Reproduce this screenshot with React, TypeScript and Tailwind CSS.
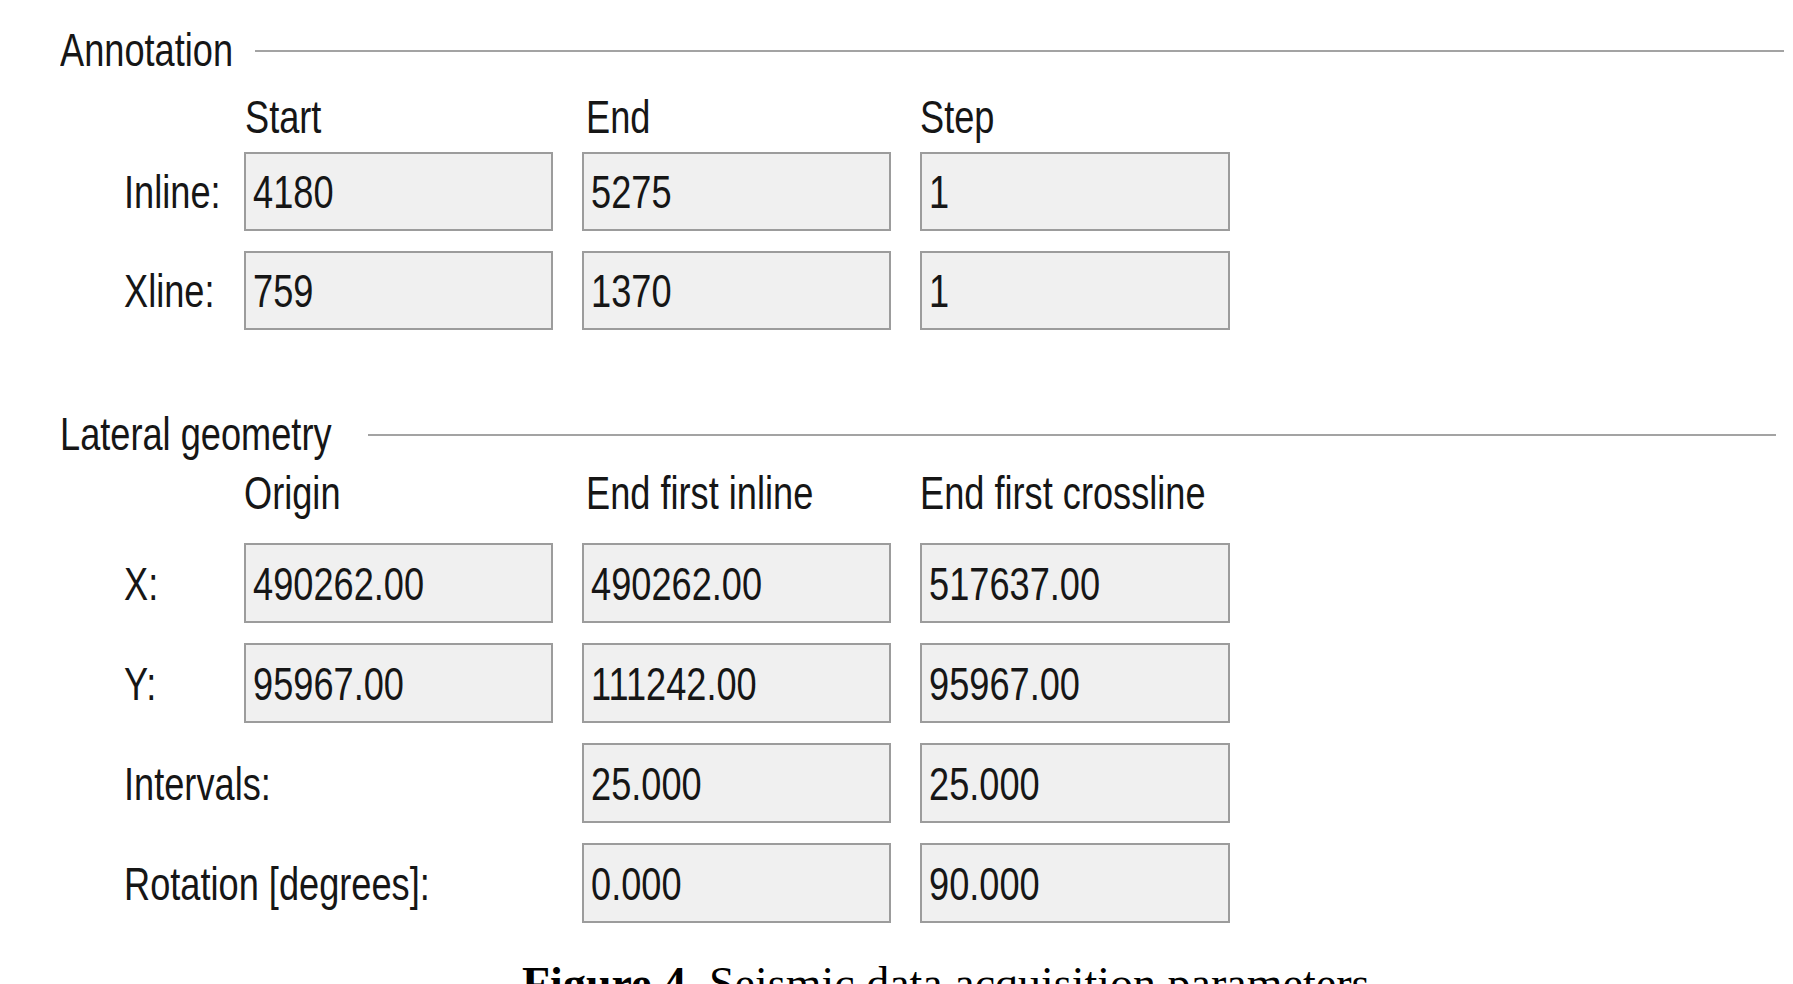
import React from "react";

const T = ({ children }: { children: React.ReactNode }) => (
  <span className="inline-block origin-left scale-x-[0.77] whitespace-nowrap">{children}</span>
);

const Box = ({ v }: { v: string }) => (
  <div className="h-[79px] border-2 border-[#9c9c9c] bg-[#f0f0f0] flex items-center pl-[7px]">
    <T>{v}</T>
  </div>
);

const Box2 = ({ v }: { v: string }) => (
  <div className="h-[80px] border-2 border-[#9c9c9c] bg-[#f0f0f0] flex items-center pl-[7px]">
    <T>{v}</T>
  </div>
);

const Label = ({ children, span2 }: { children: React.ReactNode; span2?: boolean }) => (
  <div className={"flex items-center pl-[124px] " + (span2 ? "col-span-2" : "")}>
    <T>{children}</T>
  </div>
);

const Header = ({ title, width, pr }: { title: string; width: string; pr: string }) => (
  <div className={"flex items-start pl-[60px] " + pr}>
    <div className={"shrink-0 " + width}>
      <T>{title}</T>
    </div>
    <div className="flex-1 h-[2px] bg-[#a3a3a3] mt-[24px]" />
  </div>
);

export default function App() {
  return (
    <div className="w-[1793px] h-[984px] overflow-hidden bg-white text-[#161616] font-['Liberation_Sans',Arial,sans-serif] text-[47px] leading-none">
      <div className="pt-[26px]">
        <Header title="Annotation" width="w-[195px]" pr="pr-[9px]" />

        <div className="mt-[20px] grid grid-cols-[215px_309px_309px_310px] gap-x-[29px]">
          <div />
          <div className="pl-[1px]"><T>Start</T></div>
          <div className="pl-[4px]"><T>End</T></div>
          <div><T>Step</T></div>
        </div>

        <div className="mt-[12px] grid grid-cols-[215px_309px_309px_310px] gap-x-[29px] gap-y-[20px]">
          <Label>Inline:</Label>
          <Box v="4180" />
          <Box v="5275" />
          <Box v="1" />
          <Label>Xline:</Label>
          <Box v="759" />
          <Box v="1370" />
          <Box v="1" />
        </div>
      </div>

      <div className="mt-[80px]">
        <Header title="Lateral geometry" width="w-[308px]" pr="pr-[17px]" />

        <div className="mt-[12px] grid grid-cols-[215px_309px_309px_310px] gap-x-[29px]">
          <div />
          <div><T>Origin</T></div>
          <div className="pl-[4px]"><T>End first inline</T></div>
          <div><T>End first crossline</T></div>
        </div>

        <div className="mt-[27px] grid grid-cols-[215px_309px_309px_310px] gap-x-[29px] gap-y-[20px]">
          <Label>X:</Label>
          <Box2 v="490262.00" />
          <Box2 v="490262.00" />
          <Box2 v="517637.00" />
          <Label>Y:</Label>
          <Box2 v="95967.00" />
          <Box2 v="111242.00" />
          <Box2 v="95967.00" />
          <Label span2>Intervals:</Label>
          <Box2 v="25.000" />
          <Box2 v="25.000" />
          <Label span2>Rotation [degrees]:</Label>
          <Box2 v="0.000" />
          <Box2 v="90.000" />
        </div>
      </div>

      <div className="mt-[38px] pl-[522px] font-['Liberation_Serif','Times_New_Roman',serif] text-[46px] leading-none text-black whitespace-nowrap">
        <span className="font-bold">Figure 4.</span> Seismic data acquisition parameters
      </div>
    </div>
  );
}
